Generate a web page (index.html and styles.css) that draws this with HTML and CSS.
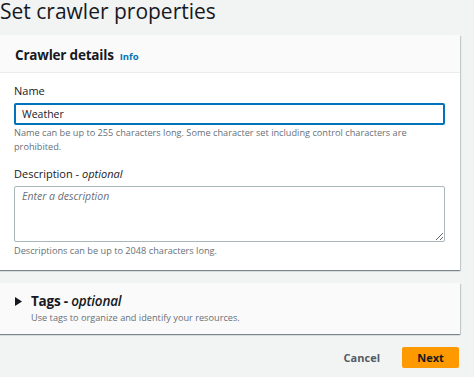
FILE: index.html
```html
<!DOCTYPE html>
<html lang="en">
<head>
    <meta charset="UTF-8">
    <title>Set crawler properties</title>
    <link rel="stylesheet" href="styles.css">
</head>
<body>
    <div class="page">
        <h1 class="page-title">Set crawler properties</h1>

        <!-- Crawler details -->
        <div class="card">
            <div class="card-header">
                <h2>Crawler details</h2>
                <a class="info-link" href="#">Info</a>
            </div>
            <div class="card-body">
                <div class="field">
                    <label class="field-label" for="name">Name</label>
                    <input id="name" class="text-input" type="text" value="Weather">
                    <div class="field-hint">Name can be up to 255 characters long. Some character set including control characters are prohibited.</div>
                </div>
                <div class="field field-desc">
                    <label class="field-label" for="desc">Description - <i>optional</i></label>
                    <textarea id="desc" class="text-area" placeholder="Enter a description"></textarea>
                    <div class="field-hint">Descriptions can be up to 2048 characters long.</div>
                </div>
            </div>
        </div>

        <!-- Tags -->
        <div class="card card-tags">
            <div class="tags-head">
                <svg class="caret" width="7" height="9" viewBox="0 0 7 9"><polygon points="0,0 7,4.5 0,9" fill="#16191f"/></svg>
                <h2>Tags - <i>optional</i></h2>
            </div>
            <div class="tags-sub">Use tags to organize and identify your resources.</div>
        </div>

        <div class="actions">
            <button class="btn btn-link">Cancel</button>
            <button class="btn btn-primary">Next</button>
        </div>
    </div>
</body>
</html>
```

FILE: styles.css
```css
* {
    margin: 0;
    padding: 0;
    box-sizing: border-box;
}

body {
    font-family: "Open Sans", "Noto Sans", sans-serif;
    background-color: #f2f3f3;
    color: #16191f;
    overflow: hidden;
}

.page {
    margin-left: -4px;
    width: 464px;
}

.page-title {
    font-size: 21px;
    font-weight: 400;
    line-height: 22px;
    margin-left: 4px;
    height: 35px;
}

.card {
    background-color: #fff;
    box-shadow: 0 1px 1px 0 rgba(0, 28, 36, 0.3), 1px 1px 1px 0 rgba(0, 28, 36, 0.15), -1px 1px 1px 0 rgba(0, 28, 36, 0.15);
}

.card-header {
    display: flex;
    align-items: baseline;
    gap: 6px;
    height: 38px;
    padding: 10px 19px 0;
    background-color: #fafafa;
    border-bottom: 1px solid #eaeded;
}

.card-header h2 {
    font-size: 13.5px;
    font-weight: 700;
    line-height: 20px;
    letter-spacing: -0.2px;
}

.info-link {
    font-size: 9.5px;
    font-weight: 700;
    color: #0073bb;
    text-decoration: none;
}

.card-body {
    padding: 10px 18px 12px;
}

.field-label {
    display: block;
    font-size: 11px;
    line-height: 16px;
    margin-bottom: 4px;
}

.field-desc {
    margin-top: 12px;
}

.text-input,
.text-area {
    display: block;
    width: 431px;
    font-family: inherit;
    font-size: 10.5px;
    color: #16191f;
    border-radius: 2px;
    outline: none;
}

.text-input {
    height: 22px;
    padding: 0 6px;
    border: 2px solid #0073bb;
}

.text-area {
    height: 56px;
    padding: 2px 7px;
    border: 1px solid #aab7b8;
    resize: vertical;
}

.text-area::placeholder {
    color: #687078;
    font-style: italic;
}

.field-hint {
    font-size: 9.2px;
    line-height: 14px;
    color: #687078;
    margin-top: 1px;
    padding-right: 20px;
}

.field-desc .field-hint {
    margin-top: 2px;
}

.card-tags {
    margin-top: 13px;
    background-color: #fafafa;
    padding: 8px 18px 9px;
}

.tags-head {
    display: flex;
    align-items: center;
    gap: 9px;
    margin-left: 1px;
}

.tags-head h2 {
    font-size: 13.5px;
    font-weight: 700;
    line-height: 20px;
    letter-spacing: -0.2px;
}

.tags-head i {
    font-weight: 600;
}

.tags-sub {
    font-size: 9.2px;
    line-height: 14px;
    color: #687078;
    margin-left: 17px;
}

.actions {
    display: flex;
    justify-content: flex-end;
    align-items: center;
    gap: 8px;
    margin-top: 13px;
    padding-right: 1px;
}

.btn {
    font-family: inherit;
    font-size: 11px;
    font-weight: 700;
    border: none;
    border-radius: 2px;
    height: 21px;
    cursor: pointer;
}

.btn-link {
    background: none;
    color: #545b64;
    padding: 0 14px;
}

.btn-primary {
    background-color: #ff9900;
    color: #16191f;
    width: 57px;
}
```
